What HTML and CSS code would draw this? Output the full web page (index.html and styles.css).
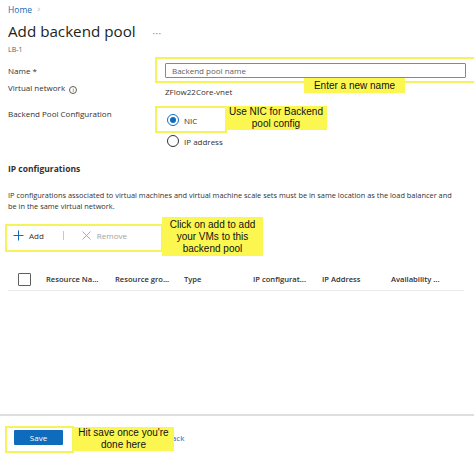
FILE: index.html
```html
<!DOCTYPE html>
<html>
<head>
<meta charset="utf-8">
<link rel="stylesheet" href="styles.css">
</head>
<body>
<div class="page">
  <div class="content">
    <div class="breadcrumb"><span class="crumb">Home</span><span class="chev">&gt;</span></div>
    <div class="title-row"><h1>Add backend pool</h1><span class="more">···</span></div>
    <div class="subtitle">LB-1</div>

    <div class="form">
      <div class="row row-name">
        <div class="label">Name *</div>
        <div class="value"><div class="input">Backend pool name</div></div>
      </div>
      <div class="row row-vnet">
        <div class="label">Virtual network <span class="info">i</span></div>
        <div class="value vnet">ZFlow22Core-vnet</div>
      </div>
      <div class="row row-config">
        <div class="label">Backend Pool Configuration</div>
        <div class="value radios">
          <div class="radio-item"><span class="radio checked"></span>NIC</div>
          <div class="radio-item"><span class="radio"></span>IP address</div>
        </div>
      </div>
    </div>

    <h2>IP configurations</h2>
    <p class="desc">IP configurations associated to virtual machines and virtual machine scale sets must be in same location as the load balancer and be in the same virtual network.</p>

    <div class="toolbar">
      <span class="tool add"><svg width="11" height="11" viewBox="0 0 11 11"><path d="M5.5 0.5v10M0.5 5.5h10" stroke="#0f6cbd" stroke-width="1" fill="none"/></svg>Add</span>
      <span class="sep"></span>
      <span class="tool remove"><svg width="9" height="9" viewBox="0 0 9 9"><path d="M0.5 0.5l8 8M8.5 0.5l-8 8" stroke="#a19f9d" stroke-width="0.9" fill="none"/></svg>Remove</span>
    </div>

    <div class="table-head">
      <span class="cb"></span>
      <span class="col c1">Resource Na...</span>
      <span class="col c2">Resource gro...</span>
      <span class="col c3">Type</span>
      <span class="col c4">IP configurat...</span>
      <span class="col c5">IP Address</span>
      <span class="col c6">Availability ...</span>
    </div>
  </div>

  <div class="footer">
    <button class="save">Save</button>
    <span class="feedback">Give feedback</span>
  </div>

  <div class="hl hl-name"></div>
  <div class="note note-name">Enter a new name</div>
  <div class="hl hl-nic"></div>
  <div class="note note-nic">Use NIC for Backend<br>pool config</div>
  <div class="hl hl-tool"></div>
  <div class="note note-tool">Click on add to add<br>your VMs to this<br>backend pool</div>
  <div class="hl hl-save"></div>
  <div class="note note-save">Hit save once you're<br>done here</div>
</div>
</body>
</html>
```

FILE: styles.css
```css
* { box-sizing: border-box; }
html, body { margin: 0; padding: 0; background: #fff; }
body {
  font-family: "Open Sans", "Noto Sans", sans-serif;
  font-size: 8px;
  color: #323130;
}
.page {
  position: relative;
  width: 474px;
  height: 456px;
  display: flex;
  flex-direction: column;
  overflow: hidden;
}
.content {
  flex: 1;
  padding: 3px 8px 0 8px;
}
.breadcrumb {
  display: flex;
  align-items: center;
  gap: 5px;
  height: 12px;
  font-size: 8.5px;
}
.crumb { color: #0f6cbd; }
.chev { color: #a19f9d; font-size: 7px; transform: scaleX(0.7); }
.title-row {
  display: flex;
  align-items: center;
  margin-top: 4px;
  height: 24px;
}
h1 {
  margin: 0;
  font-size: 15.2px;
  font-weight: 400;
  color: #201f1e;
}
.more { margin-left: 17px; color: #8a8886; font-size: 10px; margin-top: 4px; letter-spacing: 0.3px; }
.subtitle { font-size: 7px; color: #605e5c; margin-top: 2px; height: 10px; }

.form { margin-top: 6px; }
.row { display: flex; }
.label { width: 157px; flex: none; }
.row-name { height: 18px; align-items: center; }
.input {
  width: 301px;
  height: 15px;
  border: 1px solid #8a8886;
  border-radius: 1px;
  padding: 0 6px;
  display: flex;
  align-items: center;
  color: #605e5c;
  font-size: 8px;
}
.row-vnet { height: 24px; }
.row-vnet .label { padding-top: 3px; }
.vnet { padding-top: 7px; }
.info {
  display: inline-flex;
  width: 8px; height: 8px;
  border: 0.8px solid #605e5c;
  border-radius: 50%;
  font-size: 5.5px;
  align-items: center;
  justify-content: center;
  vertical-align: -1px;
  margin-left: 2px;
}
.row-config { margin-top: 5px; }
.radios { display: flex; flex-direction: column; gap: 7px; padding-top: 5px; margin-left: 2px; }
.radio-item { display: flex; align-items: center; gap: 5px; height: 14px; }
.radio {
  width: 12px; height: 12px;
  border: 1px solid #323130;
  border-radius: 50%;
  display: inline-block;
  position: relative;
}
.radio.checked { border-color: #0f6cbd; }
.radio.checked::after {
  content: "";
  position: absolute;
  left: 2px; top: 2px;
  width: 6px; height: 6px;
  border-radius: 50%;
  background: #0f6cbd;
}

h2 {
  margin: 15px 0 0 0;
  font-size: 8.5px;
  font-weight: 700;
  color: #323130;
}
.desc {
  margin: 16px 0 0 0;
  font-size: 7.4px;
  line-height: 11px;
  color: #323130;
  width: 448px;
}
.toolbar {
  display: flex;
  align-items: center;
  margin-top: 15px;
  height: 16px;
  padding-left: 5px;
}
.tool { display: flex; align-items: center; gap: 5px; }
.add { color: #323130; }
.remove { color: #a19f9d; gap: 6px; }
.sep { width: 1px; height: 9px; background: #c8c6c4; margin: 0 18px 0 19px; }

.table-head {
  display: flex;
  align-items: center;
  margin-top: 27px;
  height: 21px;
  border-bottom: 1px solid #edebe9;
  width: 456px;
  font-weight: 600;
  font-size: 7.6px;
  padding-bottom: 2px;
}
.cb {
  width: 13px; height: 13px;
  border: 1px solid #605e5c;
  border-radius: 1px;
  margin-left: 10px;
  margin-right: 15px;
  flex: none;
}
.col { width: 69px; flex: none; color: #323130; }

.footer {
  height: 42px;
  border-top: 2px solid #e1dfdd;
  display: flex;
  align-items: center;
  padding: 3px 14px 0 14px;
}
.save {
  width: 49px;
  height: 15px;
  background: #0f6cbd;
  color: #fff;
  border: none;
  border-radius: 1px;
  font-family: "Open Sans", "Noto Sans", sans-serif;
  font-size: 8px;
  padding: 0;
}
.feedback { margin-left: 69px; color: #0f6cbd; font-size: 8px; }

.hl {
  position: absolute;
  border: 2px solid #f6f35a;
}
.note {
  position: absolute;
  background: #fbf750;
  font-family: "Liberation Sans", Arial, sans-serif;
  font-size: 10px;
  line-height: 12px;
  color: #111;
  text-align: center;
  display: flex;
  align-items: center;
  justify-content: center;
}
.hl-name { left: 155px; top: 57px; width: 325px; height: 26px; }
.note-name { left: 304px; top: 78px; width: 101px; height: 15px; }
.hl-nic { left: 155px; top: 106px; width: 72px; height: 27px; }
.note-nic { left: 225px; top: 106px; width: 102px; height: 24px; }
.hl-tool { left: 5px; top: 224px; width: 158px; height: 28px; }
.note-tool { left: 162px; top: 217px; width: 101px; height: 39px; }
.hl-save { left: 5px; top: 426px; width: 69px; height: 27px; }
.note-save { left: 73px; top: 427px; width: 101px; height: 24px; }
```
